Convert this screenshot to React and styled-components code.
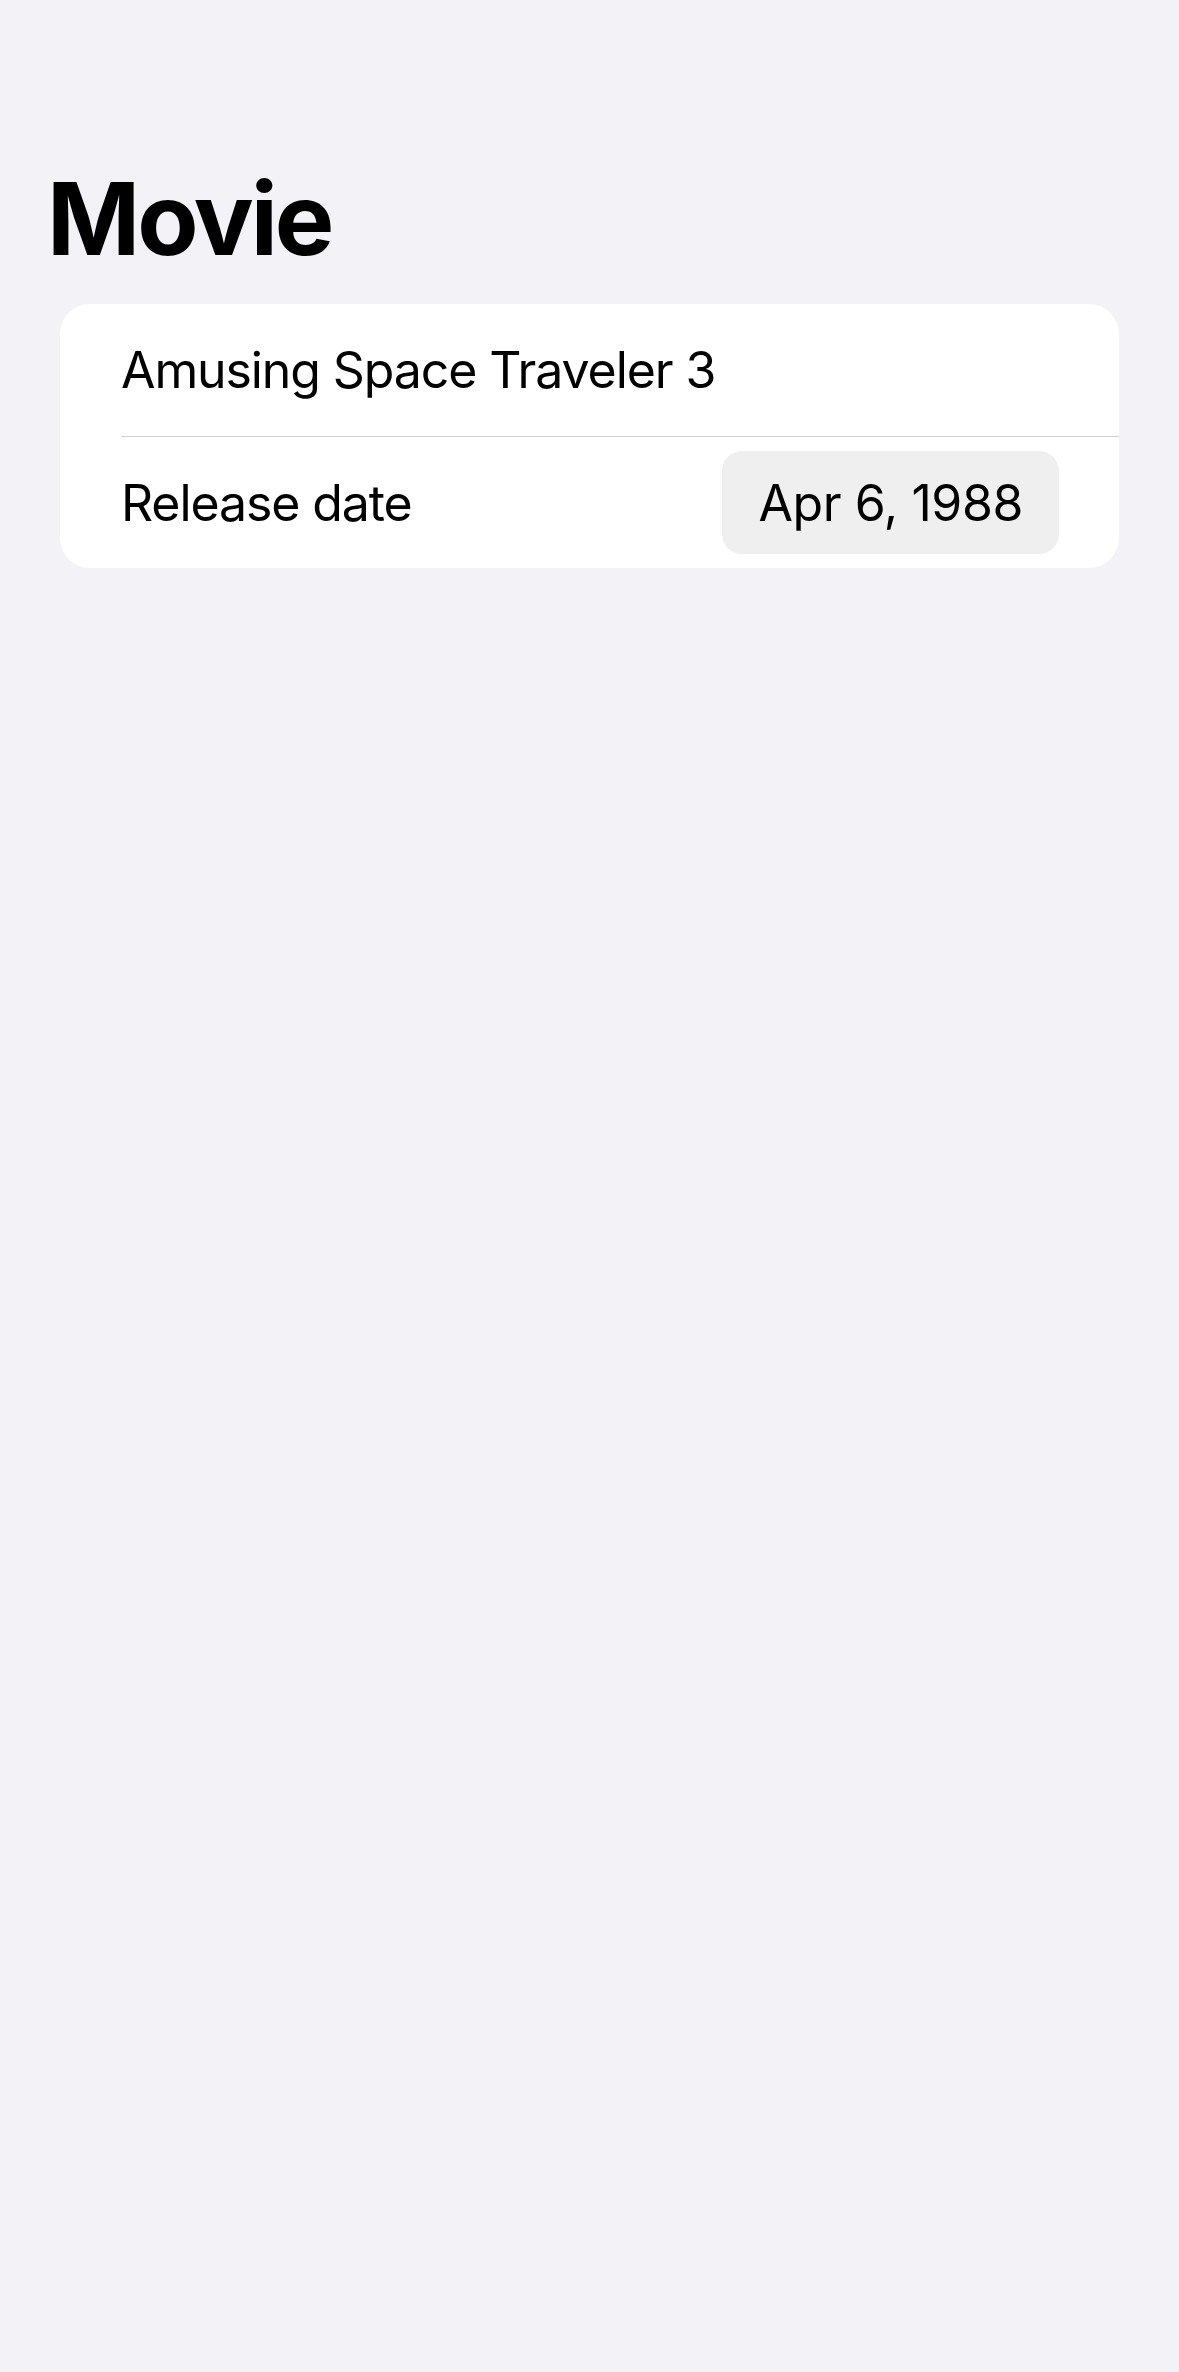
import React from "react";
import styled, { createGlobalStyle } from "styled-components";

const GlobalStyle = createGlobalStyle`
  html, body {
    margin: 0;
    padding: 0;
    background: #f2f2f7;
  }
  body {
    font-family: Inter, "Noto Sans", "Liberation Sans", sans-serif;
    color: #000;
    -webkit-font-smoothing: antialiased;
  }
`;

const Page = styled.main`
  min-height: 2372px;
  padding: 159px 60px 0 60px;
  box-sizing: border-box;
`;

const LargeTitle = styled.h1`
  margin: 0 0 25px -13px;
  font-size: 100px;
  line-height: 120px;
  font-weight: 700;
  letter-spacing: -3px;
`;

const Card = styled.section`
  background: #fff;
  border-radius: 30px;
  overflow: hidden;
`;

const Row = styled.div`
  display: flex;
  align-items: center;
  justify-content: space-between;
  min-height: 132px;
  margin-left: 61px;
  padding-right: 60px;
  box-sizing: border-box;
  border-top: ${(p) => (p.$first ? "none" : "1.5px solid #d1d1d6")};
  font-size: 50px;
  line-height: 60px;
`;

const Label = styled.span`
  white-space: nowrap;
  letter-spacing: -1.1px;
`;

const DatePill = styled.button`
  font: inherit;
  color: #000;
  border: none;
  background: #efeff0;
  border-radius: 20px;
  height: 103px;
  padding: 0 36px;
  letter-spacing: -0.4px;
  cursor: pointer;
`;

const App = () => {
  return (
    <>
      <GlobalStyle />
      <Page>
        <LargeTitle>Movie</LargeTitle>
        <Card>
          <Row $first>
            <Label>Amusing Space Traveler 3</Label>
          </Row>
          <Row>
            <Label>Release date</Label>
            <DatePill>Apr 6, 1988</DatePill>
          </Row>
        </Card>
      </Page>
    </>
  );
};

export default App;
